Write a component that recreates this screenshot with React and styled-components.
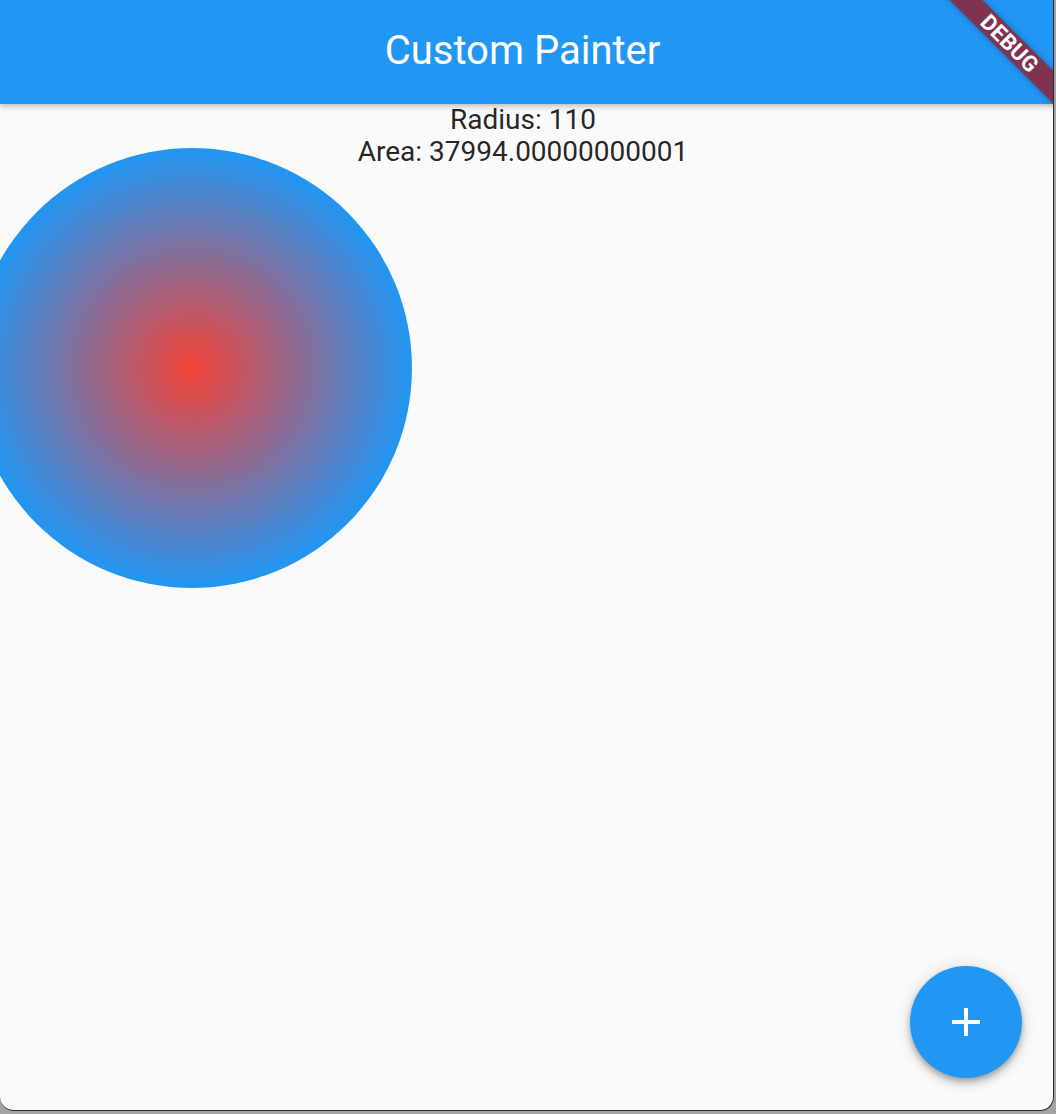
import React from 'react'
import styled, { createGlobalStyle } from 'styled-components'

const radius = 110

function App() {
  return (
    <>
      <GlobalStyle />
      <S.Window>
        <S.AppBar>
          <S.Title>Custom Painter</S.Title>
        </S.AppBar>
        <S.Body>
          <S.Canvas width="1053" height="1006">
            <defs>
              <radialGradient id="glow" cx="0.5" cy="0.5" r="0.5">
                <stop offset="0" stopColor="#f44336" />
                <stop offset="1" stopColor="#2196f3" />
              </radialGradient>
            </defs>
            <circle cx="192" cy="264" r="220" fill="url(#glow)" />
          </S.Canvas>
          <S.Info>
            <S.Line>Radius: {radius}</S.Line>
            <S.Line>Area: 37994.00000000001</S.Line>
          </S.Info>
          <S.Fab aria-label="add">
            <svg width="48" height="48" viewBox="0 0 24 24">
              <path d="M19 13h-6v6h-2v-6H5v-2h6V5h2v6h6v2z" fill="#fff" />
            </svg>
          </S.Fab>
        </S.Body>
        <S.Banner>
          <S.Ribbon>DEBUG</S.Ribbon>
        </S.Banner>
      </S.Window>
    </>
  )
}

const GlobalStyle = createGlobalStyle`
  html, body {
    margin: 0;
    padding: 0;
    background: #a3a3a3;
  }
  body {
    width: 1056px;
    height: 1114px;
    overflow: hidden;
    font-family: Roboto, "Liberation Sans", sans-serif;
  }
`

const S = {}

S.Window = styled.div`
  position: relative;
  display: flex;
  flex-direction: column;
  width: 1053px;
  height: 1110px;
  background: #fafafa;
  border-right: 1px solid #2a2a2a;
  border-bottom: 1px solid #2a2a2a;
  border-radius: 0 0 14px 14px;
  overflow: hidden;
`

S.AppBar = styled.header`
  position: relative;
  z-index: 2;
  display: flex;
  align-items: center;
  justify-content: center;
  height: 104px;
  flex-shrink: 0;
  padding-right: 8px;
  background: #2196f3;
  box-shadow: 0 4px 6px rgba(0, 0, 0, 0.12), 0 2px 3px rgba(0, 0, 0, 0.1);
`

S.Title = styled.h1`
  margin: 0 0 4px 0;
  font-size: 40px;
  font-weight: 400;
  color: #fff;
`

S.Body = styled.main`
  position: relative;
  flex: 1;
  display: flex;
  flex-direction: column;
`

S.Canvas = styled.svg`
  position: absolute;
  left: 0;
  top: 0;
`

S.Info = styled.div`
  position: relative;
  display: flex;
  flex-direction: column;
  align-items: center;
  padding-right: 7px;
`

S.Line = styled.div`
  font-size: 28px;
  line-height: 32px;
  color: rgba(0, 0, 0, 0.87);
`

S.Fab = styled.button`
  position: absolute;
  right: 31px;
  bottom: 32px;
  display: flex;
  align-items: center;
  justify-content: center;
  width: 112px;
  height: 112px;
  padding: 0;
  border: none;
  border-radius: 50%;
  background: #2196f3;
  box-shadow: 0 6px 10px rgba(0, 0, 0, 0.14), 0 1px 18px rgba(0, 0, 0, 0.12),
    0 3px 5px rgba(0, 0, 0, 0.2);
`

S.Banner = styled.div`
  position: absolute;
  top: 0;
  right: 0;
  width: 0;
  height: 0;
  z-index: 5;
  transform: rotate(45deg);
  transform-origin: 0 0;
`

S.Ribbon = styled.div`
  position: absolute;
  left: -80px;
  top: 50px;
  width: 160px;
  height: 23px;
  display: flex;
  align-items: center;
  justify-content: center;
  background: #7f3350;
  box-shadow: 0 0 6px rgba(0, 0, 0, 0.3);
  color: #fff;
  font-size: 22px;
  line-height: 22px;
  font-weight: 700;
  letter-spacing: 0.2px;
`

export default App
